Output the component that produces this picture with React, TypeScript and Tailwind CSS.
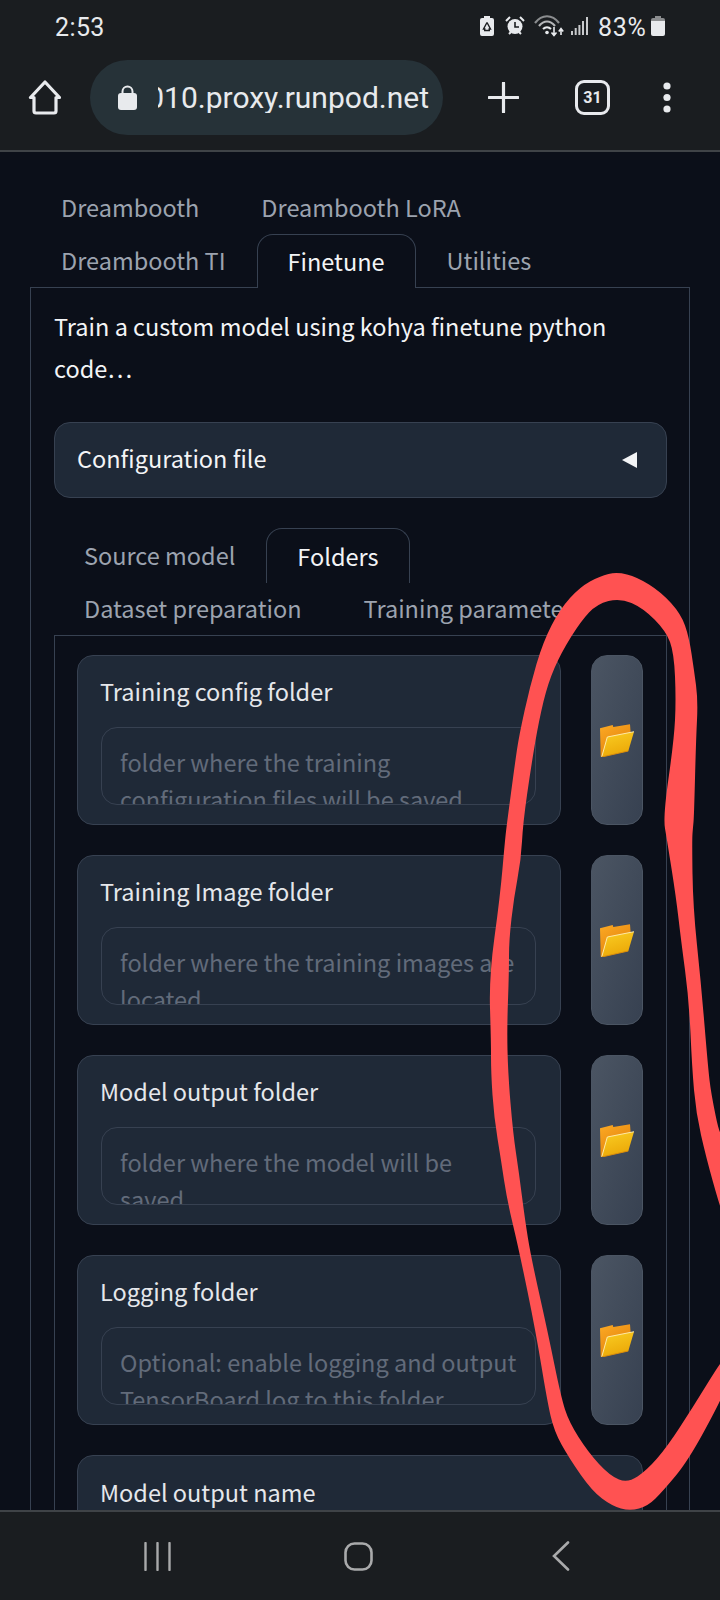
import React from "react";

const scribble: [number, number][] = [
  [617, 572], [600, 576], [580, 587], [560, 609], [543, 642], [530, 686], [519, 736], [515, 763], [507, 823], [505, 840],
  [500, 897], [489, 977], [491, 1040], [491, 1073], [494, 1117], [501, 1160], [507, 1200], [519, 1250], [536, 1333],
  [547, 1400], [554, 1431], [569, 1458], [592, 1491], [612, 1506], [630, 1511], [648, 1506], [663, 1491], [688, 1461],
  [720, 1402], [724, 1390], [724, 1360], [720, 1363], [693, 1407], [667, 1447], [647, 1470], [628, 1483], [610, 1476], [588, 1452],
  [569, 1422], [561, 1397], [548, 1333], [531, 1257], [525, 1220], [519, 1173], [513, 1133], [508, 1073], [507, 1027],
  [509, 973], [509, 940], [514, 897], [521, 860], [523, 823], [531, 767], [539, 720], [548, 683], [561, 653], [581, 621],
  [597, 604], [620, 598], [643, 608], [666, 631], [674, 653], [676, 700], [674, 740], [663, 817], [667, 840], [676, 897],
  [681, 940], [689, 1000], [692, 1067], [696, 1113], [706, 1157], [720, 1207], [724, 1215], [724, 1130], [720, 1137], [711, 1093],
  [708, 1067], [701, 983], [693, 907], [692, 840], [693, 827], [694, 817], [696, 740], [698, 700], [694, 670], [689, 637],
  [681, 614], [661, 592], [637, 577],
];

function smoothPath(p: [number, number][]) {
  const mid = (a: [number, number], b: [number, number]) => [(a[0] + b[0]) / 2, (a[1] + b[1]) / 2];
  const s = mid(p[p.length - 1], p[0]);
  let d = `M${s[0]} ${s[1]}`;
  p.forEach((pt, i) => {
    const m = mid(pt, p[(i + 1) % p.length]);
    d += ` Q${pt[0]} ${pt[1]} ${m[0]} ${m[1]}`;
  });
  return d + "Z";
}

function FolderIcon({ id }: { id: string }) {
  return (
    <svg width="34" height="33" viewBox="0 0 34 33">
      <defs>
        <linearGradient id={`b${id}`} x1="0" y1="0" x2="0.6" y2="1">
          <stop offset="0" stopColor="#fdab24" />
          <stop offset="1" stopColor="#e07f0b" />
        </linearGradient>
        <linearGradient id={`f${id}`} x1="0.2" y1="0" x2="0.6" y2="1">
          <stop offset="0" stopColor="#f9cc22" />
          <stop offset="1" stopColor="#eba606" />
        </linearGradient>
      </defs>
      <path d="M0 4.3 L12.7 1 L13.3 3 L30 .3 L30.7 9 L28 27 L.7 32.7Z" fill={`url(#b${id})`} />
      <path d="M7.3 13 L34 7.7 L28.3 27 L1.7 33Z" fill={`url(#f${id})`} />
      <path d="M1.7 33 L7.3 13 L34 7.7" fill="none" stroke="#fff0b5" strokeWidth="0.9" />
      <path d="M1.7 33 L28.3 27" fill="none" stroke="#d98c0c" strokeWidth="1" />
    </svg>
  );
}

const rows = [
  { label: "Training config folder", lines: ["folder where the training", "configuration files will be saved"] },
  { label: "Training Image folder", lines: ["folder where the training images are", "located"] },
  { label: "Model output folder", lines: ["folder where the model will be", "saved"] },
  { label: "Logging folder", lines: ["Optional: enable logging and output", "TensorBoard log to this folder"] },
];

export default function App() {
  return (
    <div className="relative flex h-[1600px] w-[720px] flex-col overflow-hidden bg-[#0b0f19] font-['Noto_Sans_CJK_SC',sans-serif]">
      {/* Phone status bar */}
      <div className="flex h-[52px] shrink-0 items-center justify-between bg-[#1a1d20] pl-[55px] pr-[55px] font-['Roboto',sans-serif] text-[#e8eaed]">
        <span className="mt-[2px] text-[25px] leading-none tracking-[0.4px]">2:53</span>
        <div className="flex items-center">
          <svg width="14" height="20" viewBox="0 0 14 20">
            <path d="M4 0h6v2h2a2 2 0 0 1 2 2v14a2 2 0 0 1-2 2H2a2 2 0 0 1-2-2V4a2 2 0 0 1 2-2h2Z" fill="#e8eaed" />
            <path d="M7 6.5 L10.5 13 H8.5 M7 6.5 L3.5 13 H5.5 M4 14.5 H10" fill="none" stroke="#1a1d20" strokeWidth="1.4" />
          </svg>
          <svg className="ml-[11px]" width="20" height="20" viewBox="0 0 20 20">
            <path d="M1 5 L5 1 M19 5 L15 1 M4 18 L6 16 M16 18 L14 16" stroke="#e8eaed" strokeWidth="2" />
            <circle cx="10" cy="10.5" r="7.5" fill="#e8eaed" />
            <path d="M10 6 V11 H14" fill="none" stroke="#1a1d20" strokeWidth="1.6" />
          </svg>
          <svg className="ml-[9px]" width="30" height="22" viewBox="0 0 30 22">
            <path d="M1 8 C8 -1 18 -1 25 8" fill="none" stroke="#8b8d8f" strokeWidth="2.2" />
            <path d="M5 11 C10 5 16 5 21 11" fill="none" stroke="#b5b7b9" strokeWidth="2.2" />
            <path d="M9 14 C11.5 11.5 14.5 11.5 17 14" fill="none" stroke="#e8eaed" strokeWidth="2" />
            <circle cx="13" cy="17.5" r="1.8" fill="#e8eaed" />
            <path d="M20 12 V20 M17.5 17.5 L20 20.5 L22.5 17.5 M27 20 V14 M24.8 16.5 L27 13.5 L29.2 16.5" fill="none" stroke="#e8eaed" strokeWidth="1.6" />
          </svg>
          <svg className="ml-[7px]" width="17" height="18" viewBox="0 0 17 18">
            <rect x="0" y="14" width="2" height="4" fill="#c8cacc" />
            <rect x="3.7" y="11" width="2" height="7" fill="#c8cacc" />
            <rect x="7.4" y="8" width="2" height="10" fill="#c8cacc" />
            <rect x="11" y="4" width="2" height="14" fill="#c8cacc" />
            <rect x="15" y="0" width="2" height="18" fill="#c8cacc" />
          </svg>
          <span className="ml-[10px] mt-[2px] w-[48px] whitespace-nowrap text-[25px] leading-none tracking-[0.7px]">83%</span>
          <svg className="ml-[5px]" width="14" height="20" viewBox="0 0 14 20">
            <path d="M4 0h6v2h2a2 2 0 0 1 2 2v2H0V4a2 2 0 0 1 2-2h2Z" fill="#8b8d8f" />
            <path d="M0 5h14v13a2 2 0 0 1-2 2H2a2 2 0 0 1-2-2Z" fill="#e8eaed" />
          </svg>
        </div>
      </div>

      {/* Browser toolbar */}
      <div className="flex h-[98px] shrink-0 items-center bg-[#1a1d20] pb-[15px] pt-[8px] font-['Roboto',sans-serif]">
        <svg className="ml-[28px]" width="34" height="36" viewBox="0 0 34 36">
          <path d="M17 2 L2.5 17.5 H6 V31 Q6 33 8 33 H26 Q28 33 28 31 V17.5 H31.5Z" fill="none" stroke="#e8eaed" strokeWidth="3.2" strokeLinejoin="round" />
        </svg>
        <div className="ml-[28px] flex h-[75px] w-[353px] items-center rounded-full bg-[#263238]">
          <svg className="ml-[28px]" width="19" height="26" viewBox="0 0 19 26">
            <path d="M4.5 10 V6.5 a5 5 0 0 1 10 0 V10" fill="none" stroke="#e8eaed" strokeWidth="2" />
            <rect x="0" y="8" width="19" height="17" rx="3" fill="#e8eaed" />
          </svg>
          <div className="ml-[21px] flex w-[271px] justify-end overflow-hidden">
            <span className="whitespace-nowrap text-[30px] leading-none text-[#e8eaed]">010.proxy.runpod.net</span>
          </div>
        </div>
        <svg className="ml-[45px]" width="31" height="31" viewBox="0 0 31 31">
          <path d="M15.5 1 V30 M1 15.5 H30" stroke="#e8eaed" strokeWidth="3.2" strokeLinecap="round" />
        </svg>
        <div className="ml-[56px] flex h-[35px] w-[35px] items-center justify-center rounded-[9px] border-[3px] border-[#e8eaed] text-[16px] font-bold leading-none text-[#e8eaed]">
          31
        </div>
        <svg className="ml-[53px]" width="8" height="31" viewBox="0 0 8 31">
          <circle cx="4" cy="4" r="3.6" fill="#e8eaed" />
          <circle cx="4" cy="15.5" r="3.6" fill="#e8eaed" />
          <circle cx="4" cy="27" r="3.6" fill="#e8eaed" />
        </svg>
      </div>
      <div className="h-[2px] shrink-0 bg-[#3f4347]" />

      {/* Page */}
      <main className="flex-1 overflow-hidden bg-[#0b0f19] px-[30px] pt-[29px] text-[23.5px]">
        <div className="flex h-[53px] items-center text-[#9ca3af]">
          <span className="px-[31px]">Dreambooth</span>
          <span className="px-[31px]">Dreambooth LoRA</span>
        </div>
        <div className="flex h-[53px] items-start text-[#9ca3af]">
          <span className="flex h-[53px] items-center px-[31px]">Dreambooth TI</span>
          <span className="relative z-10 flex h-[54px] items-center rounded-t-[16px] border-x border-t border-[#374151] bg-[#0b0f19] px-[30px] text-[#f3f4f6]">
            Finetune
          </span>
          <span className="flex h-[53px] items-center px-[31px]">Utilities</span>
        </div>

        <section className="h-[1300px] border border-b-0 border-[#374151] pl-[23px] pr-[22px] pt-[17px]">
          <p className="leading-[42px] text-[#f3f4f6]">Train a custom model using kohya finetune python code…</p>

          <div className="mt-[33px] flex h-[76px] items-center justify-between rounded-[16px] border border-[#374151] bg-[#1f2937] pl-[22px] pr-[29px] text-[#f3f4f6]">
            <span className="pb-[2px]">Configuration file</span>
            <span className="h-0 w-0 border-y-[8px] border-r-[15px] border-y-transparent border-r-[#f3f4f6]" />
          </div>

          <div className="mt-[30px] flex h-[54px] items-start text-[#9ca3af]">
            <span className="flex h-[54px] items-center pl-[30px] pr-[31px] pt-[2px]">Source model</span>
            <span className="flex h-[55px] items-center rounded-t-[16px] border-x border-t border-[#374151] px-[30px] pt-[2px] text-[#f3f4f6]">Folders</span>
          </div>
          <div className="flex h-[53px] w-[520px] items-center overflow-hidden whitespace-nowrap text-[#9ca3af]">
            <span className="pl-[30px] pr-[31px]">Dataset preparation</span>
            <span className="px-[31px]">Training parameters</span>
          </div>

          <div className="h-[900px] border border-b-0 border-[#374151] pl-[22px] pt-[19px]">
            <div className="flex flex-col gap-[30px]">
              {rows.map((r, i) => (
                <div key={r.label} className="flex gap-[30px]">
                  <div className="h-[170px] w-[484px] rounded-[16px] border border-[#374151] bg-[#1f2937] pl-[23px] pr-[24px] pt-[16px]">
                    <div className="-ml-px h-[55px] leading-[38px] text-[#e5e7eb]">{r.label}</div>
                    <div className="h-[78px] overflow-hidden rounded-[16px] border border-[#374151] pl-[18px] pt-[16px] leading-[37px] text-[#626b7a]">
                      {r.lines.map((l) => (
                        <div key={l} className="whitespace-nowrap">{l}</div>
                      ))}
                    </div>
                  </div>
                  <div className="flex h-[170px] w-[52px] items-center justify-center rounded-[16px] border border-[#4b5563] bg-gradient-to-br from-[#4b5563] to-[#374151]">
                    <FolderIcon id={String(i)} />
                  </div>
                </div>
              ))}
              <div className="h-[170px] w-[566px] rounded-[16px] border border-[#374151] bg-[#1f2937] pl-[22px] pt-[17px]">
                <div className="leading-[38px] text-[#e5e7eb]">Model output name</div>
              </div>
            </div>
          </div>
        </section>
      </main>

      {/* Android navigation bar */}
      <div className="h-[2px] shrink-0 bg-[#3f4347]" />
      <div className="flex h-[88px] shrink-0 items-center bg-[#1a1d20] pl-[144px]">
        <svg width="27" height="29" viewBox="0 0 27 29">
          <path d="M1.5 1 V28 M13.5 1 V28 M25.5 1 V28" stroke="#a9aaab" strokeWidth="2.4" strokeLinecap="round" />
        </svg>
        <svg className="ml-[173px]" width="29" height="29" viewBox="0 0 29 29">
          <rect x="1.5" y="1.5" width="26" height="26" rx="9" fill="none" stroke="#a9aaab" strokeWidth="2.6" />
        </svg>
        <svg className="ml-[179px]" width="18" height="30" viewBox="0 0 18 30">
          <path d="M16 1.5 L2 15 L16 28.5" fill="none" stroke="#a9aaab" strokeWidth="2.6" strokeLinecap="round" />
        </svg>
      </div>

      {/* Hand-drawn red annotation over the screenshot */}
      <svg className="pointer-events-none absolute left-0 top-0 z-20" width="720" height="1600" viewBox="0 0 720 1600">
        <path d={smoothPath(scribble)} fill="#ff5252" />
      </svg>
    </div>
  );
}
